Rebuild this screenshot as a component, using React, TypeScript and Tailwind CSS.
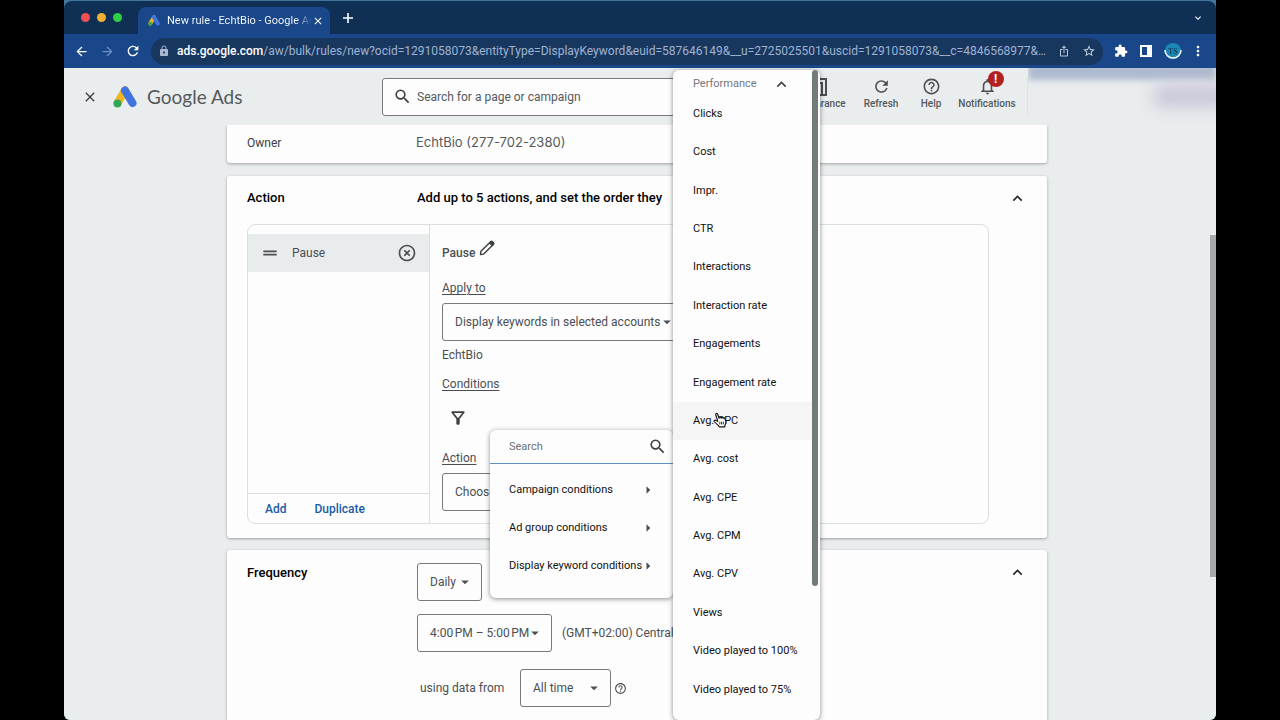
import type { ReactNode } from "react";
import {
  MdArrowBack,
  MdArrowDropDown,
  MdArrowForward,
  MdArrowRight,
  MdClose,
  MdDragHandle,
  MdExpandLess,
  MdExpandMore,
  MdExtension,
  MdHelpOutline,
  MdHighlightOff,
  MdIosShare,
  MdLock,
  MdMoreVert,
  MdNotificationsNone,
  MdOutlineFilterAlt,
  MdRefresh,
  MdSearch,
  MdStarBorder,
} from "react-icons/md";

const metrics = [
  "Clicks",
  "Cost",
  "Impr.",
  "CTR",
  "Interactions",
  "Interaction rate",
  "Engagements",
  "Engagement rate",
  "Avg. CPC",
  "Avg. cost",
  "Avg. CPE",
  "Avg. CPM",
  "Avg. CPV",
  "Views",
  "Video played to 100%",
  "Video played to 75%",
];

const conditionGroups = [
  "Campaign conditions",
  "Ad group conditions",
  "Display keyword conditions",
];

function AdsLogo({ className }: { className: string }) {
  return (
    <svg viewBox="0 0 48 44" className={className} aria-hidden="true">
      <path d="M24 9 L9 34" stroke="#f2b51d" strokeWidth="16" strokeLinecap="round" />
      <path d="M24 9 L39 34" stroke="#3f74e0" strokeWidth="16" strokeLinecap="round" />
      <circle cx="9" cy="35" r="8" fill="#33a652" />
    </svg>
  );
}

function SidePanelIcon() {
  return (
    <svg viewBox="0 0 12 12" className="size-3" aria-hidden="true">
      <path fill="#fff" fillRule="evenodd" d="M0 0h12v12H0zM2 2v8h5V2z" />
    </svg>
  );
}

function AppearanceIcon() {
  return (
    <svg viewBox="0 0 16 18" className="h-[18px] w-4" fill="none" stroke="#4b4f53" strokeWidth="2" aria-hidden="true">
      <path d="M1 1h14v16H1z" />
      <path d="M5 5h6v12" />
    </svg>
  );
}

function PencilIcon() {
  return (
    <svg viewBox="0 0 16 16" className="size-4" fill="none" stroke="#3c4043" strokeWidth="1.4" strokeLinejoin="round" aria-hidden="true">
      <path d="M1.5 14.5l.4-3.2L11.6 1.7c.6-.6 1.4-.6 2 0l.7.7c.6.6.6 1.4 0 2L4.7 14.1z" />
      <path d="M10.5 2.8l2.7 2.7 1.5-1.7-2.5-2.2z" fill="#3c4043" />
    </svg>
  );
}

function HandCursor() {
  return (
    <svg viewBox="0 0 16 18" className="h-4 w-3.5" fill="#fff" stroke="#111" strokeWidth="1.3" strokeLinejoin="round" aria-hidden="true">
      <path d="M5.5 10.5L3.2 3.3C2.7 1.4 4.7.7 5.3 2.4L7 7c.2-1.5 2-1.5 2.3-.2.4-1.2 2-1 2.3.3.5-1 2-.7 2.2.6l.9 3.3c.3 1.6-.3 2.6-1 3.8l-.3 2H7.2C6.8 14.9 3.6 13.5 1.5 11c-.9-1.3.5-2.3 1.7-1.4z" />
      <path d="M7.8 11v3M9.8 11v3M11.8 11v3" strokeWidth="1" />
    </svg>
  );
}

interface FieldSelectProps {
  id: string;
  label: string;
  value: string;
  className: string;
}

function FieldSelect({ id, label, value, className }: FieldSelectProps) {
  return (
    <div className={`relative h-[38px] shrink-0 ${className}`}>
      <select
        id={id}
        aria-label={label}
        className="size-full appearance-none rounded-[3px] border border-[#75797c] bg-transparent pl-3 text-xs text-[#4b4f53]"
      >
        <option>{value}</option>
      </select>
      <MdArrowDropDown className="pointer-events-none absolute top-2.5 right-2 size-[18px] text-[#4b4f53]" />
    </div>
  );
}

function HeaderAction({ label, width, children }: { label: string; width: string; children: ReactNode }) {
  return (
    <button className={`flex flex-col items-center text-[10px] leading-4 font-medium text-[#55595c] ${width}`}>
      <span className="relative flex h-[19px] items-center text-[#4b4f53]">{children}</span>
      {label}
    </button>
  );
}

function BrowserChrome() {
  return (
    <div className="shrink-0 rounded-t-lg bg-[#0f2f54] text-white">
      <div className="flex h-[33px] items-end pr-3">
        <div className="flex gap-[7px] self-center pr-4 pl-[17px]">
          <span className="size-[9px] rounded-full bg-[#f0504f]" />
          <span className="size-[9px] rounded-full bg-[#f2b032]" />
          <span className="size-[9px] rounded-full bg-[#2ed046]" />
        </div>
        <div className="flex h-[27px] w-48 items-center rounded-t-lg bg-[#19478a] pr-1.5 pl-2.5">
          <AdsLogo className="h-[11px] w-3" />
          <span className="ml-[7px] flex-1 overflow-hidden bg-linear-to-r from-white from-88% to-transparent bg-clip-text text-[11px] leading-4 whitespace-nowrap text-transparent">
            New rule - EchtBio - Google Ads
          </span>
          <button aria-label="Close tab">
            <MdClose className="size-3" />
          </button>
        </div>
        <button aria-label="New tab" className="ml-3 self-center text-white">
          <svg viewBox="0 0 12 12" className="size-3" stroke="currentColor" strokeWidth="1.6">
            <path d="M6 1v10M1 6h10" />
          </svg>
        </button>
        <button aria-label="Search tabs" className="ml-auto self-center">
          <MdExpandMore className="size-3" />
        </button>
      </div>

      <div className="flex h-[34px] items-center bg-[#19478a] pr-3.5 pl-2.5">
        <button aria-label="Back"><MdArrowBack className="size-[15px]" /></button>
        <button aria-label="Forward" className="ml-[11px]"><MdArrowForward className="size-[15px] text-[#6d90c2]" /></button>
        <button aria-label="Reload" className="ml-2.5"><MdRefresh className="size-4" /></button>
        <div className="ml-2.5 flex h-[27px] min-w-0 flex-1 items-center rounded-full bg-[#18375f] px-[7px]">
          <MdLock className="size-3 shrink-0 text-[#a9b8cd]" />
          <span className="ml-[7px] min-w-0 flex-1 truncate text-xs text-[#9fb3d1]">
            <span className="font-medium text-white">ads.google.com</span>
            /aw/bulk/rules/new?ocid=1291058073&amp;entityType=DisplayKeyword&amp;euid=587646149&amp;__u=2725025501&amp;uscid=1291058073&amp;__c=4846568977&amp;authuser=0
          </span>
          <button aria-label="Share" className="ml-1.5"><MdIosShare className="size-3 text-[#b7c4d8]" /></button>
          <button aria-label="Bookmark" className="ml-3"><MdStarBorder className="size-3.5 text-[#c8d3e2]" /></button>
        </div>
        <div className="ml-[11px] flex items-center gap-3">
          <MdExtension className="size-3.5" />
          <SidePanelIcon />
          <svg viewBox="0 0 18 18" className="size-[18px]" aria-hidden="true">
            <circle cx="9" cy="9" r="8" fill="#1c87b8" />
            <path d="M1 8a8 8 0 0 0 16 0" fill="none" stroke="#fff" strokeWidth="1.5" />
            <text x="9" y="12" textAnchor="middle" fontSize="8" fontFamily="Liberation Serif, serif" fill="#102a44">TS</text>
          </svg>
          <MdMoreVert className="-mx-1 size-4" />
        </div>
      </div>
    </div>
  );
}

function AppHeader() {
  return (
    <header className="flex h-[57px] shrink-0 items-center bg-[#eaedee]">
      <div className="flex w-[318px] shrink-0 items-center pl-[18px]">
        <button aria-label="Close"><MdClose className="size-4 text-[#3c4043]" /></button>
        <AdsLogo className="ml-[15px] h-[22px] w-6" />
        <span className="ml-2.5 font-[Lato] text-[19px] leading-6 text-[#55595c]">Google Ads</span>
      </div>
      <div className="flex h-[38px] flex-1 items-center rounded-[3px] border border-[#75797c] bg-[#fdfdfd] pl-2.5">
        <MdSearch className="size-[19px] text-[#3c4043]" />
        <input
          type="text"
          aria-label="Search"
          placeholder="Search for a page or campaign"
          className="ml-[5px] min-w-0 flex-1 bg-transparent text-xs outline-none placeholder:text-[#55595c]"
        />
      </div>
      <div className="flex shrink-0 items-start border-r border-[#dfe2e3] pr-2 pb-1 pl-6">
        <HeaderAction label="Appearance" width="w-[60px]"><AppearanceIcon /></HeaderAction>
        <HeaderAction label="Refresh" width="ml-2.5 w-[44px]"><MdRefresh className="size-[19px]" /></HeaderAction>
        <HeaderAction label="Help" width="ml-3.5 w-[28px]"><MdHelpOutline className="size-[19px]" /></HeaderAction>
        <HeaderAction label="Notifications" width="ml-2.5 w-[64px]">
          <MdNotificationsNone className="size-[19px]" />
          <span className="absolute -top-1.5 left-2.5 flex size-4 items-center justify-center rounded-full bg-[#b3201f] text-xs font-bold text-white">
            !
          </span>
        </HeaderAction>
      </div>
      <div className="relative h-full w-[188px] shrink-0 overflow-hidden">
        <div className="absolute inset-x-0 -top-1 h-4 bg-[#adb9ce] blur-[3px]" />
        <div className="absolute top-4 -right-4 h-6 w-20 rounded-full bg-[#c9c9d9] blur-[8px]" />
      </div>
    </header>
  );
}

function Card({ className, children }: { className: string; children: ReactNode }) {
  return (
    <section className={`bg-[#fdfdfd] px-5 shadow-[0_1px_3px_rgba(60,64,67,0.45)] ${className}`}>
      {children}
    </section>
  );
}

function ActionCard() {
  return (
    <Card className="mt-[13px] rounded-[3px] pb-3.5">
      <div className="flex h-12 items-center pb-1 text-[13px] font-medium text-black">
        <h2 className="w-[170px]">Action</h2>
        <p className="flex-1">Add up to 5 actions, and set the order they</p>
        <button aria-label="Collapse action"><MdExpandLess className="size-[19px] text-[#202124]" /></button>
      </div>
      <div className="mr-[38px] flex rounded-lg border border-[#dcdfe0]">
        <div className="flex w-[182px] shrink-0 flex-col border-r border-[#dcdfe0] pt-[9px]">
          <div className="flex h-[38px] items-center bg-[#e9eced] px-3 text-[#4b4f53]">
            <MdDragHandle className="size-5" />
            <span className="ml-3 flex-1 text-xs">Pause</span>
            <button aria-label="Remove Pause"><MdHighlightOff className="size-5" /></button>
          </div>
          <div className="mt-auto flex h-[30px] items-center gap-7 border-t border-[#dcdfe0] pl-[17px] text-xs font-medium text-[#1a5ba8]">
            <button>Add</button>
            <button>Duplicate</button>
          </div>
        </div>
        <div className="flex flex-col items-start px-3 pt-5 pb-3 text-xs text-[#4b4f53]">
          <div className="flex h-4 items-center gap-1 font-medium">
            Pause
            <button aria-label="Rename" className="pb-2.5"><PencilIcon /></button>
          </div>
          <label htmlFor="apply-to" className="mt-[19px] underline underline-offset-2">Apply to</label>
          <FieldSelect id="apply-to" label="Apply to" value="Display keywords in selected accounts" className="mt-[7px] w-[242px]" />
          <span className="mt-1.5">EchtBio</span>
          <span className="mt-[13px] underline underline-offset-2">Conditions</span>
          <button aria-label="Add condition" className="mt-4 ml-1.5">
            <MdOutlineFilterAlt className="size-5 text-[#3c4043]" />
          </button>
          <label htmlFor="rule-action" className="mt-[22px] underline underline-offset-2">Action</label>
          <FieldSelect id="rule-action" label="Action" value="Choose an action" className="mt-[7px] w-[148px]" />
        </div>
      </div>
    </Card>
  );
}

function FrequencyCard() {
  return (
    <Card className="mt-3 flex flex-1 items-start rounded-t-[3px] pt-[13px] text-xs text-[#4b4f53]">
      <h2 className="w-[170px] pt-0.5 text-[13px] leading-4 font-medium text-black">Frequency</h2>
      <div className="flex flex-1 flex-col">
        <FieldSelect id="interval" label="Frequency" value="Daily" className="w-[65px]" />
        <div className="mt-[13px] flex items-center gap-2.5">
          <FieldSelect id="time" label="Time" value={"4:00\u202fPM – 5:00\u202fPM"} className="w-[135px]" />
          (GMT+02:00) Central European Time
        </div>
        <div className="mt-[17px] flex items-center">
          <label htmlFor="range" className="w-[103px] pl-[3px]">using data from</label>
          <FieldSelect id="range" label="Date range" value="All time" className="w-[91px]" />
          <MdHelpOutline className="ml-[3px] size-[13px]" />
        </div>
      </div>
      <button aria-label="Collapse frequency"><MdExpandLess className="size-[19px] text-[#202124]" /></button>
    </Card>
  );
}

function ConditionMenu() {
  return (
    <div className="mt-[362px] w-[183px] shrink-0 rounded-md bg-[#fdfdfd] pb-[13px] shadow-[0_1px_5px_rgba(0,0,0,0.45)]">
      <div className="flex h-[34px] items-center border-b border-b-[#5f92c0] pr-1.5 pl-[19px]">
        <input
          type="text"
          aria-label="Search conditions"
          placeholder="Search"
          className="min-w-0 flex-1 bg-transparent pt-0.5 text-[11px] outline-none placeholder:text-[#6b6f72]"
        />
        <MdSearch className="size-[19px] text-[#3c4043]" />
      </div>
      <ul className="pt-[7px]">
        {conditionGroups.map((group) => (
          <li key={group}>
            <button className="flex h-[38px] w-full items-center justify-between pr-4 pl-[19px] text-[11px] whitespace-nowrap text-[#111]">
              {group}
              <MdArrowRight className="-ml-1 size-[18px] shrink-0 text-[#4b4f53]" />
            </button>
          </li>
        ))}
      </ul>
    </div>
  );
}

function MetricMenu() {
  return (
    <div className="relative mt-0.5 flex w-[147px] shrink-0 flex-col self-stretch rounded-md bg-[#fdfdfd] pb-[11px] shadow-[0_1px_5px_rgba(0,0,0,0.45)]">
      <div className="flex h-[25px] shrink-0 items-center justify-between pt-1 pr-[29px] pl-5 text-[11px] text-[#74787b]">
        Performance
        <MdExpandLess className="size-[19px] text-[#3c4043]" />
      </div>
      <ul className="flex flex-1 flex-col">
        {metrics.map((metric) => (
          <li key={metric} className="relative flex flex-1">
            <button
              className={`mr-2 flex flex-1 items-center pl-5 text-[11px] whitespace-nowrap text-[#111] ${
                metric === "Avg. CPC" ? "bg-[#f5f5f5]" : ""
              }`}
            >
              {metric}
            </button>
            {metric === "Avg. CPC" && (
              <span className="absolute top-2.5 left-10"><HandCursor /></span>
            )}
          </li>
        ))}
      </ul>
      <div className="absolute top-0 right-0.5 h-[516px] w-1.5 rounded-full bg-[#737b7a]" />
    </div>
  );
}

export default function App() {
  return (
    <div className="h-screen bg-black px-16 font-[Roboto,sans-serif]">
      <div className="flex h-full flex-col overflow-hidden rounded-b-md bg-[#44759a] pt-px">
        <BrowserChrome />
        <div className="relative flex min-h-0 flex-1 flex-col bg-[#eaedee]">
          <AppHeader />
          <div className="flex min-h-0 flex-1">
            <main className="flex flex-1 justify-center overflow-hidden">
              <div className="flex w-[820px] flex-col">
                <Card className="flex h-[38px] shrink-0 items-center rounded-b-[3px] pb-0.5 text-xs text-[#3c4043]">
                  <h2 className="w-[169px]">Owner</h2>
                  <span className="font-[Inter,sans-serif] text-[13px] text-[#55595c]">EchtBio (277-702-2380)</span>
                </Card>
                <ActionCard />
                <FrequencyCard />
              </div>
            </main>
            <div className="flex w-1.5 shrink-0 flex-col pt-[110px]">
              <div className="h-[342px] bg-[#a6aaaa]" />
            </div>
          </div>

          {/* open menus, lined up with the content column */}
          <div className="pointer-events-none absolute inset-y-0 right-1.5 left-0 flex justify-center">
            <div className="pointer-events-auto flex w-[820px] items-start pl-[263px]">
              <ConditionMenu />
              <MetricMenu />
            </div>
          </div>
        </div>
      </div>
    </div>
  );
}
